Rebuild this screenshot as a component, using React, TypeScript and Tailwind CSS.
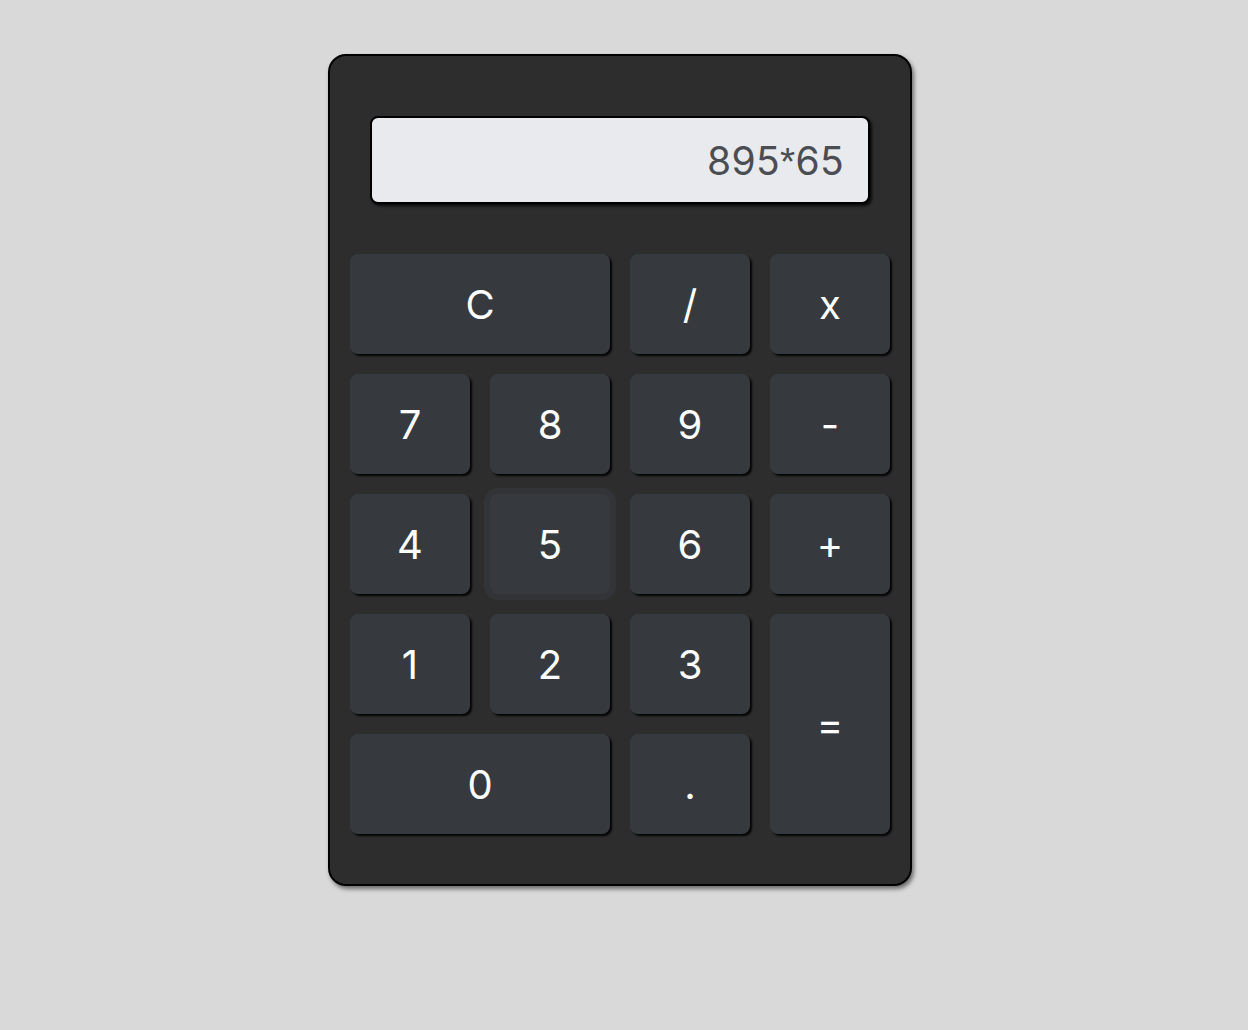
const keys: { label: string; className?: string; active?: boolean }[] = [
  { label: 'C', className: 'col-span-2' },
  { label: '/' },
  { label: 'x' },
  { label: '7' },
  { label: '8' },
  { label: '9' },
  { label: '-' },
  { label: '4' },
  { label: '5', active: true },
  { label: '6' },
  { label: '+' },
  { label: '1' },
  { label: '2' },
  { label: '3' },
  { label: '=', className: 'row-span-2' },
  { label: '0', className: 'col-span-2' },
  { label: '.' },
];

function Key({ label, className = '', active }: { label: string; className?: string; active?: boolean }) {
  return (
    <button
      type="button"
      className={`flex items-center justify-center rounded-lg bg-[#363a3e] pt-[2px] text-[40px] font-normal leading-none text-white outline-none ${
        active ? 'ring-[6px] ring-[#323437]' : 'shadow-[2px_2px_2px_rgba(0,0,0,0.9)]'
      } ${className}`}
    >
      {label}
    </button>
  );
}

export default function App() {
  return (
    <div
      className="min-h-screen bg-[#d9d9d9] flex justify-center pt-[54px]"
      style={{ fontFamily: 'Inter, "Liberation Sans", sans-serif' }}
    >
      <div className="ml-[-8px] h-[832px] w-[584px] rounded-[18px] border-2 border-black bg-[#2d2d2d] px-5 pt-[60px] shadow-[2px_3px_4px_rgba(0,0,0,0.5)]">
        <div className="mx-5 flex h-[88px] items-center justify-end rounded-lg border-2 border-black bg-[#e9eaee] pr-6 shadow-[2px_2px_3px_rgba(0,0,0,0.8)]">
          <span className="pt-[2px] text-[39px] leading-none tracking-[0.3px] text-[#4a4e53]">
            895<span className="font-['Liberation_Sans']">*</span>65
          </span>
        </div>
        <div className="mt-[50px] grid grid-cols-[repeat(4,120px)] grid-rows-[repeat(5,100px)] gap-5">
          {keys.map(k => (
            <Key key={k.label} {...k} />
          ))}
        </div>
      </div>
    </div>
  );
}
